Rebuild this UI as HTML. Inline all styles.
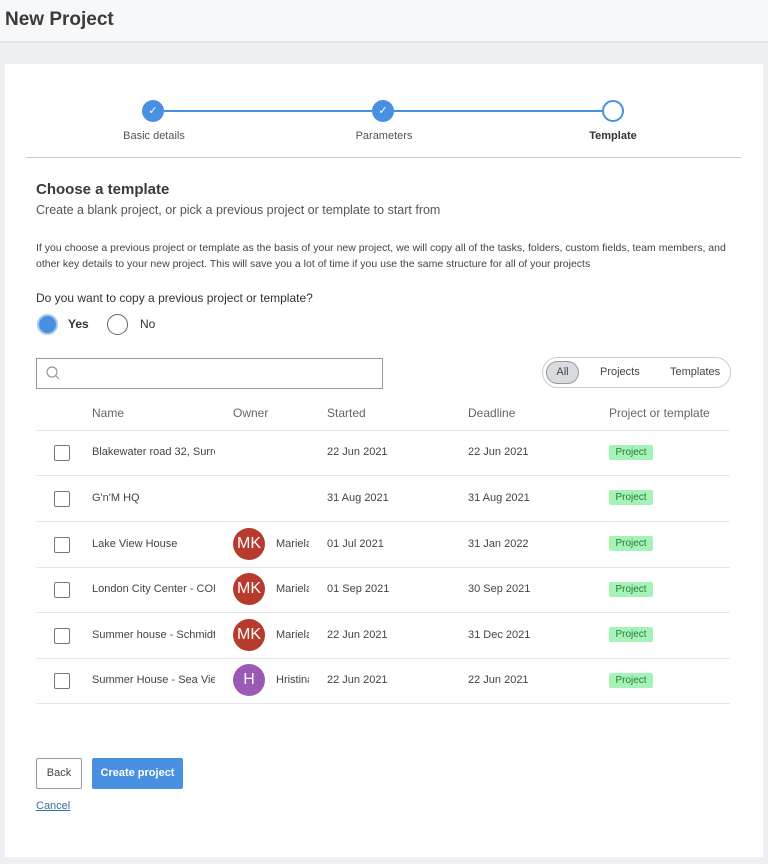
<!DOCTYPE html>
<html><head><meta charset="utf-8"><style>
*{box-sizing:border-box;margin:0;padding:0}
body{width:768px;height:864px;background:#eef0f3;font-family:"Liberation Sans",sans-serif;color:#444;position:relative;overflow:hidden}
.hdr{position:absolute;left:0;top:0;width:768px;height:43px;background:#f7f8fa;border-bottom:2px solid #e2e4e8}
.hdr h1{position:absolute;left:5px;top:9px;font-size:19px;font-weight:bold;color:#3a3a3a}
.card{position:absolute;left:5px;top:64px;width:758px;height:793px;background:#fff}
.abs{position:absolute}
.step{position:absolute;width:22px;height:22px;border-radius:50%;top:100px;background:#4a90e2;color:#fff;font-size:11px;text-align:center;line-height:22px}
.line{position:absolute;top:110px;height:2px;background:#4a90e2}
.sl{position:absolute;top:130px;font-size:11px;color:#555;transform:translateX(-50%)}
.t{position:absolute;white-space:nowrap}
.row{position:absolute;left:36px;width:694px;border-top:1px solid #e8e8e8}
.cb{position:absolute;left:54px;width:16px;height:16px;border:1px solid #777;border-radius:2px}
.tag{position:absolute;left:609px;width:44px;height:15px;background:#a6f3b8;color:#2a7a3a;font-size:10px;text-align:center;line-height:15px;border-radius:2px}
.av{position:absolute;left:233px;width:32px;height:32px;border-radius:50%;color:#fff;font-size:16px;text-align:center;line-height:32px}
.c{font-size:11px;color:#444}
</style></head><body>
<div class="hdr"><h1>New Project</h1></div>
<div class="card"></div>
<div class="line" style="left:164px;width:208px"></div>
<div class="line" style="left:394px;width:208px"></div>
<div class="step" style="left:142px">✓</div>
<div class="step" style="left:372px">✓</div>
<div class="step" style="left:602px;background:#fff;border:2px solid #4a90e2"></div>
<div class="sl" style="left:154px">Basic details</div>
<div class="sl" style="left:384px">Parameters</div>
<div class="sl" style="left:613px;font-weight:bold;color:#333">Template</div>
<div class="abs" style="left:26px;top:157px;width:715px;height:1px;background:#ccc"></div>
<div class="t" style="left:36px;top:181px;font-size:15px;font-weight:bold;color:#3a3a3a">Choose a template</div>
<div class="t" style="left:36px;top:203px;font-size:12.5px;color:#555">Create a blank project, or pick a previous project or template to start from</div>
<div class="t" style="left:36px;top:240px;font-size:10.5px;color:#444;line-height:16px;white-space:normal;width:700px">If you choose a previous project or template as the basis of your new project, we will copy all of the tasks, folders, custom fields, team members, and other key details to your new project. This will save you a lot of time if you use the same structure for all of your projects</div>
<div class="t" style="left:36px;top:291px;font-size:12px;color:#333">Do you want to copy a previous project or template?</div>
<div class="abs" style="left:37px;top:314px;width:21px;height:21px;border-radius:50%;background:#4a90e2;border:2px solid #a8c8f0"></div>
<div class="t" style="left:68px;top:317px;font-size:12px;font-weight:bold;color:#333">Yes</div>
<div class="abs" style="left:107px;top:314px;width:21px;height:21px;border-radius:50%;border:1px solid #666"></div>
<div class="t" style="left:140px;top:317px;font-size:12px;color:#333">No</div>
<div class="abs" style="left:36px;top:358px;width:347px;height:31px;border:1px solid #999"></div>
<svg class="abs" style="left:45px;top:365px" width="16" height="16" viewBox="0 0 16 16"><circle cx="7" cy="7" r="5" fill="none" stroke="#999" stroke-width="1.2"/><line x1="10.5" y1="10.5" x2="14" y2="14" stroke="#999" stroke-width="1.2"/></svg>
<div class="abs" style="left:542px;top:357px;width:189px;height:31px;border:1px solid #ccc;border-radius:16px"></div>
<div class="abs" style="left:546px;top:361px;width:33px;height:23px;border:1px solid #999;border-radius:12px;background:#d8dbe0;font-size:11px;text-align:center;line-height:21px">All</div>
<div class="t c" style="left:600px;top:366px">Projects</div>
<div class="t c" style="left:670px;top:366px">Templates</div>
<div class="t" style="left:92px;top:406px;font-size:12px;color:#666">Name</div>
<div class="t" style="left:233px;top:406px;font-size:12px;color:#666">Owner</div>
<div class="t" style="left:327px;top:406px;font-size:12px;color:#666">Started</div>
<div class="t" style="left:468px;top:406px;font-size:12px;color:#666">Deadline</div>
<div class="t" style="left:609px;top:406px;font-size:12px;color:#666">Project or template</div>

<div class="row" style="top:430px"></div>
<div class="cb" style="top:445px"></div><div class="t c" style="left:92px;top:446px;width:123px;overflow:hidden">Blakewater road 32, Surrey</div><div class="t c" style="left:327px;top:446px">22 Jun 2021</div><div class="t c" style="left:468px;top:446px">22 Jun 2021</div><div class="tag" style="top:445px">Project</div>
<div class="row" style="top:475px"></div>
<div class="cb" style="top:491px"></div><div class="t c" style="left:92px;top:492px">G'n'M HQ</div><div class="t c" style="left:327px;top:492px">31 Aug 2021</div><div class="t c" style="left:468px;top:492px">31 Aug 2021</div><div class="tag" style="top:490px">Project</div>
<div class="row" style="top:521px"></div>
<div class="cb" style="top:537px"></div><div class="t c" style="left:92px;top:538px">Lake View House</div><div class="av" style="top:528px;background:#b63a2e">MK</div><div class="t c" style="left:276px;top:538px;width:33px;overflow:hidden">Mariela</div><div class="t c" style="left:327px;top:538px">01 Jul 2021</div><div class="t c" style="left:468px;top:538px">31 Jan 2022</div><div class="tag" style="top:536px">Project</div>
<div class="row" style="top:567px"></div>
<div class="cb" style="top:582px"></div><div class="t c" style="left:92px;top:583px;width:123px;overflow:hidden">London City Center - CONSTRUCTION</div><div class="av" style="top:573px;background:#b63a2e">MK</div><div class="t c" style="left:276px;top:583px;width:33px;overflow:hidden">Mariela</div><div class="t c" style="left:327px;top:583px">01 Sep 2021</div><div class="t c" style="left:468px;top:583px">30 Sep 2021</div><div class="tag" style="top:582px">Project</div>
<div class="row" style="top:612px"></div>
<div class="cb" style="top:628px"></div><div class="t c" style="left:92px;top:629px;width:123px;overflow:hidden">Summer house - Schmidt - X</div><div class="av" style="top:619px;background:#b63a2e">MK</div><div class="t c" style="left:276px;top:629px;width:33px;overflow:hidden">Mariela</div><div class="t c" style="left:327px;top:629px">22 Jun 2021</div><div class="t c" style="left:468px;top:629px">31 Dec 2021</div><div class="tag" style="top:627px">Project</div>
<div class="row" style="top:658px"></div>
<div class="cb" style="top:673px"></div><div class="t c" style="left:92px;top:674px;width:123px;overflow:hidden">Summer House - Sea View</div><div class="av" style="top:664px;background:#9b59b6">H</div><div class="t c" style="left:276px;top:674px;width:33px;overflow:hidden">Hristina</div><div class="t c" style="left:327px;top:674px">22 Jun 2021</div><div class="t c" style="left:468px;top:674px">22 Jun 2021</div><div class="tag" style="top:673px">Project</div>
<div class="row" style="top:703px"></div>

<div class="abs" style="left:36px;top:758px;width:46px;height:31px;border:1px solid #999;border-radius:2px;font-size:11px;text-align:center;line-height:29px;color:#444">Back</div>
<div class="abs" style="left:92px;top:758px;width:91px;height:31px;background:#4a90e2;border-radius:2px;font-size:11px;font-weight:bold;text-align:center;line-height:31px;color:#fff">Create project</div>
<div class="t" style="left:36px;top:800px;font-size:11px;color:#3a6ea5;text-decoration:underline">Cancel</div>
</body></html>
